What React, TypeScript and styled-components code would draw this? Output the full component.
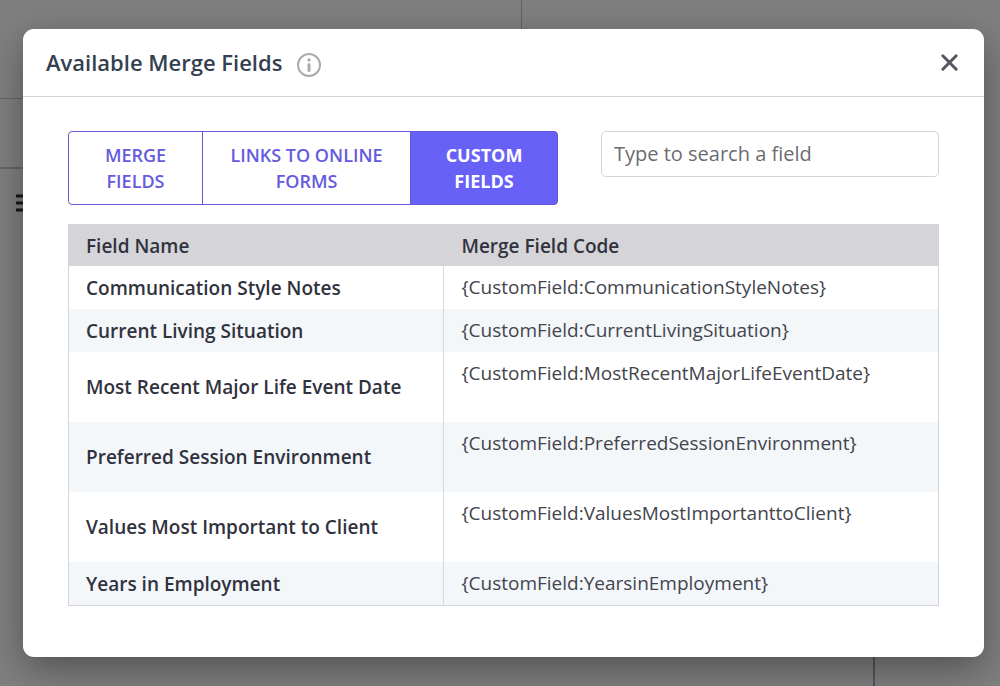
import React, { useState } from "react";
import styled, { createGlobalStyle } from "styled-components";

const GlobalStyle = createGlobalStyle`
  *, *::before, *::after { box-sizing: border-box; }
  html, body, #root { height: 100%; }
  body {
    margin: 0;
    background: #7f7f7f;
    font-family: "Open Sans", "Noto Sans", sans-serif;
    font-size: 19px;
    color: #31323e;
  }
`;

const Screen = styled.div`
  position: relative;
  min-height: 100%;
  padding: 29px 16px 29px 23px;
  overflow: hidden;
`;

const Backdrop = styled.svg`
  position: absolute;
  inset: 0;
  width: 100%;
  height: 100%;
`;

const Dialog = styled.section`
  position: relative;
  background: #fff;
  border-radius: 11px;
  box-shadow: 0 12px 36px rgba(0, 0, 0, 0.35);
`;

const Header = styled.header`
  display: flex;
  align-items: center;
  height: 68px;
  padding: 0 22px 0 23px;
  border-bottom: 1px solid #d5d5d9;
`;

const Title = styled.h2`
  margin: 0;
  padding-bottom: 2px;
  font-size: 22px;
  line-height: 30px;
  font-weight: 600;
  color: #343f50;
`;

const IconButton = styled.button`
  display: flex;
  padding: 0;
  border: 0;
  background: none;
  cursor: pointer;
`;

const InfoButton = styled(IconButton)`
  margin: 4px auto 0 14px;
`;

const Body = styled.div`
  padding: 34px 45px 51px;
`;

const Toolbar = styled.div`
  display: flex;
  justify-content: space-between;
  align-items: flex-start;
  gap: 43px;
  margin-bottom: 19px;
`;

const Tabs = styled.div`
  display: flex;
`;

const Tab = styled.button<{ $active: boolean; $width: number }>`
  width: ${(p) => p.$width}px;
  padding: 10px 24px;
  border: 1px solid #6358dc;
  margin-left: -1px;
  background: ${(p) => (p.$active ? "#6861f8" : "#fff")};
  color: ${(p) => (p.$active ? "#fff" : "#655be0")};
  font-family: inherit;
  font-size: 18px;
  line-height: 26px;
  font-weight: ${(p) => (p.$active ? 700 : 600)};
  text-transform: uppercase;
  cursor: pointer;
  &:first-child { margin-left: 0; border-radius: 4px 0 0 4px; }
  &:last-child { border-radius: 0 4px 4px 0; }
`;

const Search = styled.input`
  flex: 1;
  min-width: 0;
  height: 46px;
  padding: 0 12px 2px;
  border: 1px solid #d5d5d9;
  border-radius: 5px;
  font-family: inherit;
  font-size: 20px;
  color: #31323e;
  &::placeholder { color: #6b6c72; opacity: 1; }
`;

const Table = styled.table`
  width: 100%;
  border-spacing: 0;
  table-layout: fixed;
  border: 1px solid #d4d4d9;
  line-height: 26px;
`;

const NameCol = styled.col`
  width: 43.2%;
`;

const HeadCell = styled.th`
  height: 41px;
  padding: 0 17px;
  background: #d5d4d9;
  text-align: left;
  font-weight: 600;
`;

const Row = styled.tr<{ $tall: boolean }>`
  height: ${(p) => (p.$tall ? 70 : 43)}px;
  &:nth-child(even) { background: #f3f7fa; }
`;

const NameCell = styled.th`
  padding: 0 17px;
  border-right: 1px solid #d9d9dd;
  text-align: left;
  vertical-align: middle;
  font-weight: 600;
`;

const CodeCell = styled.td`
  padding: 8px 17px;
  vertical-align: top;
  color: #43444d;
`;

const tabs = [
  { label: "Merge Fields", width: 135 },
  { label: "Links to Online Forms", width: 209 },
  { label: "Custom Fields", width: 148 },
];

const fields = [
  { name: "Communication Style Notes", code: "CommunicationStyleNotes", tall: false },
  { name: "Current Living Situation", code: "CurrentLivingSituation", tall: false },
  { name: "Most Recent Major Life Event Date", code: "MostRecentMajorLifeEventDate", tall: true },
  { name: "Preferred Session Environment", code: "PreferredSessionEnvironment", tall: true },
  { name: "Values Most Important to Client", code: "ValuesMostImportanttoClient", tall: true },
  { name: "Years in Employment", code: "YearsinEmployment", tall: false },
];

export default function App() {
  const [active, setActive] = useState("Custom Fields");
  return (
    <Screen>
      <GlobalStyle />
      <Backdrop aria-hidden="true">
        <path d="M0 98.5H40" stroke="#676767" />
        <path d="M0 168H40" stroke="#62666b" strokeWidth="2" />
        <path d="M521.5 0V29" stroke="#606060" />
        <path d="M874 640V700" stroke="#50565c" strokeWidth="2" />
        <path d="M16 196H30M16 203H30M16 210H30" stroke="#171717" strokeWidth="3" />
      </Backdrop>
      <Dialog role="dialog" aria-labelledby="dialog-title">
        <Header>
          <Title id="dialog-title">Available Merge Fields</Title>
          <InfoButton type="button" aria-label="About merge fields">
            <svg width="26" height="26" viewBox="0 0 26 26" fill="none">
              <circle cx="13" cy="13" r="11" stroke="#ababaf" strokeWidth="2" />
              <circle cx="13" cy="8" r="1.7" fill="#ababaf" />
              <path d="M13 12.5V18.5" stroke="#ababaf" strokeWidth="3" strokeLinecap="round" />
            </svg>
          </InfoButton>
          <IconButton type="button" aria-label="Close">
            <svg width="24" height="24" viewBox="0 0 24 24" fill="none">
              <path d="M4.8 4.8L18.2 18.2M18.2 4.8L4.8 18.2" stroke="#565561" strokeWidth="3" strokeLinecap="round" />
            </svg>
          </IconButton>
        </Header>
        <Body>
          <Toolbar>
            <Tabs>
              {tabs.map((t) => (
                <Tab
                  key={t.label}
                  type="button"
                  aria-pressed={active === t.label}
                  $active={active === t.label}
                  $width={t.width}
                  onClick={() => setActive(t.label)}
                >
                  {t.label}
                </Tab>
              ))}
            </Tabs>
            <Search type="search" aria-label="Search fields" placeholder="Type to search a field" />
          </Toolbar>
          <Table>
            <colgroup>
              <NameCol />
              <col />
            </colgroup>
            <thead>
              <tr>
                <HeadCell scope="col">Field Name</HeadCell>
                <HeadCell scope="col">Merge Field Code</HeadCell>
              </tr>
            </thead>
            <tbody>
              {fields.map((f) => (
                <Row key={f.code} $tall={f.tall}>
                  <NameCell scope="row">{f.name}</NameCell>
                  <CodeCell>{`{CustomField:${f.code}}`}</CodeCell>
                </Row>
              ))}
            </tbody>
          </Table>
        </Body>
      </Dialog>
    </Screen>
  );
}
